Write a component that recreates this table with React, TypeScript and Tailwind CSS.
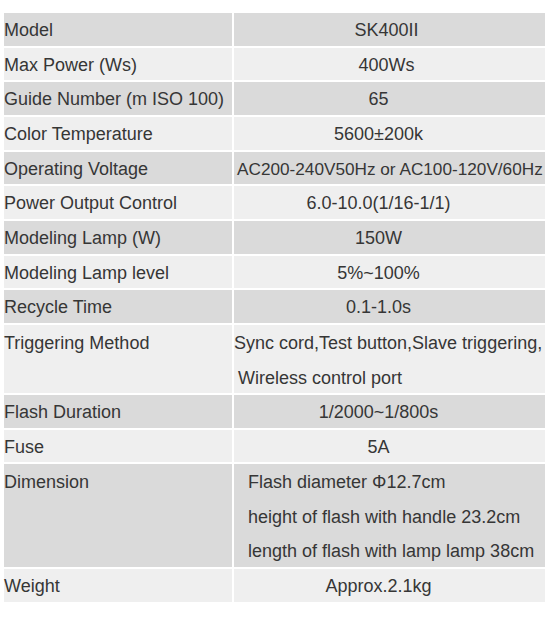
import React from 'react';

type Spec = {
  label: string;
  value: string[];
  align?: 'center' | 'left' | 'block';
  wide?: boolean;
  tight?: boolean;
};

const SPECS: Spec[] = [
  { label: 'Model', value: ['SK400II'], wide: true },
  { label: 'Max Power (Ws)', value: ['400Ws'], wide: true },
  { label: 'Guide Number (m ISO 100)', value: ['65'] },
  { label: 'Color Temperature', value: ['5600±200k'] },
  { label: 'Operating Voltage', value: ['AC200-240V50Hz or AC100-120V/60Hz'], align: 'left', tight: true },
  { label: 'Power Output Control', value: ['6.0-10.0(1/16-1/1)'] },
  { label: 'Modeling Lamp (W)', value: ['150W'] },
  { label: 'Modeling Lamp level', value: ['5%~100%'] },
  { label: 'Recycle Time', value: ['0.1-1.0s'] },
  {
    label: 'Triggering Method',
    value: ['Sync cord,Test button,Slave triggering,', 'Wireless control port'],
    align: 'left',
  },
  { label: 'Flash Duration', value: ['1/2000~1/800s'] },
  { label: 'Fuse', value: ['5A'] },
  {
    label: 'Dimension',
    value: ['Flash diameter Φ12.7cm', 'height of flash with handle 23.2cm', 'length of flash with lamp lamp 38cm'],
    align: 'block',
  },
  { label: 'Weight', value: ['Approx.2.1kg'] },
];

export default function App() {
  return (
    <div className="min-h-[640px] w-[549px] bg-white pl-[4px] pt-[13px] font-['Liberation_Sans',Arial,sans-serif] text-[18px] text-[#363636]">
      <div className="grid w-[541px] grid-cols-[228px_311px] gap-[2px]">
        {SPECS.map((row, i) => {
          const bg = i % 2 === 0 ? 'bg-[#dadada]' : 'bg-[#efefef]';
          const lines = row.value.length;
          const height = lines === 1 ? 'h-[32.67px]' : lines === 2 ? 'h-[68px]' : 'h-[103px]';
          const multi = lines > 1;
          return (
            <React.Fragment key={row.label}>
              {/* label column */}
              <div className={`${bg} ${height} whitespace-nowrap ${multi ? 'pt-[1px]' : ''} ${row.align === 'block' ? 'leading-[34.5px]' : 'leading-[35px]'}`}>
                {row.label}
              </div>
              {/* value column */}
              <div className={`${bg} ${height} whitespace-nowrap`}>
                {row.align === 'left' && (
                  <div className={`leading-[35px] ${multi ? 'pt-[1px]' : 'pl-[3px]'} ${row.tight ? 'text-[17.2px]' : ''}`}>
                    {row.value.map((line, j) => (
                      <div key={line} className={j > 0 ? 'pl-[4px]' : ''}>
                        {line}
                      </div>
                    ))}
                  </div>
                )}
                {row.align === 'block' && (
                  <div className="pl-[14px] pt-[1px] leading-[34.5px]">
                    {row.value.map((line) => (
                      <div key={line}>{line}</div>
                    ))}
                  </div>
                )}
                {!row.align && (
                  <div className={`text-center leading-[35px] ${row.wide ? 'pr-[6px]' : 'pr-[22px]'}`}>
                    {row.value[0]}
                  </div>
                )}
              </div>
            </React.Fragment>
          );
        })}
      </div>
    </div>
  );
}
